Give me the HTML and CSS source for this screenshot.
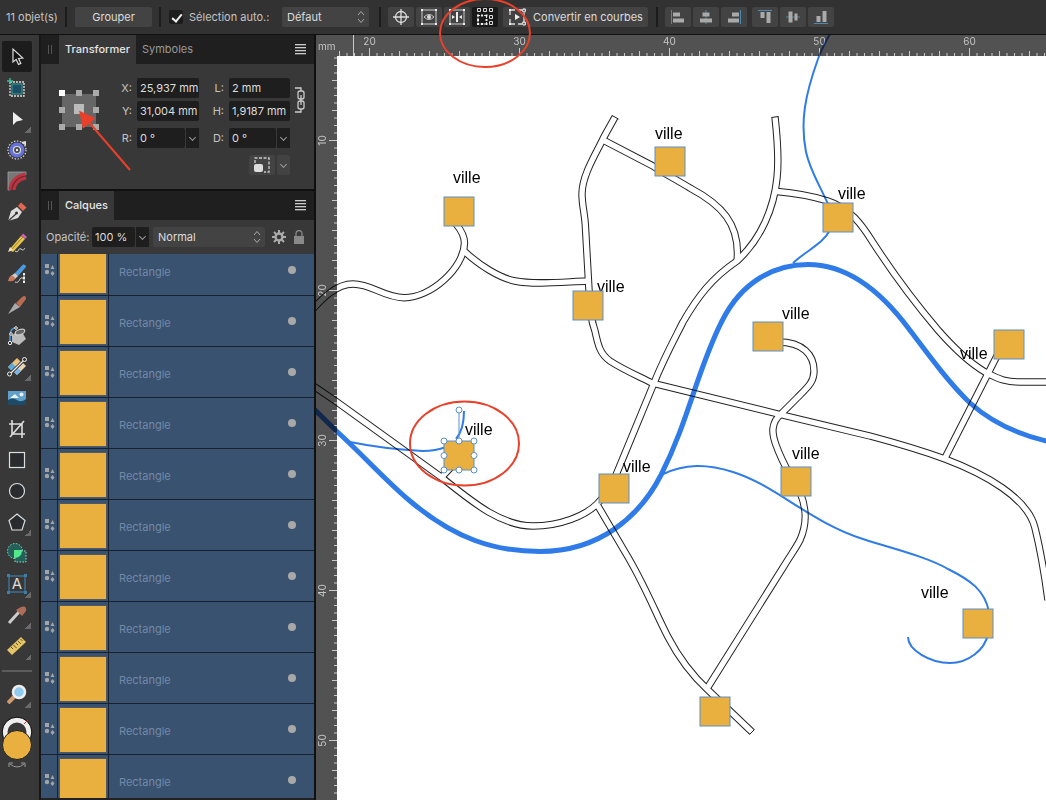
FILE: index.html
```html
<!DOCTYPE html>
<html lang="fr">
<head>
<meta charset="utf-8">
<title>Carte des villes</title>
<link rel="stylesheet" href="styles.css">
</head>

<body>

<header class="topbar">
  <span class="count">11 objet(s)</span>
  <span class="sep"></span>
  <button class="btn group">Grouper</button>
  <span class="sep"></span>
  <label class="check"><input type="checkbox" checked> Sélection auto.:</label>
  <div class="dropdown mode">
    <select aria-label="Sélection auto."><option>Défaut</option></select>
    <svg width="8" height="14" viewBox="0 0 8 14"><path d="M1 5l3-3.500 3 3.500M1 9l3 3.500 3-3.500"/></svg>
  </div>
  <span class="sep"></span>
  <div class="btns">
    <button class="btn icon" aria-label="Centre"><svg width="18" height="18" viewBox="0 0 18 18"><g fill="none" stroke="#ddd" stroke-width="1.300"><circle cx="9" cy="9" r="5.500"/><path d="M9 1v16M1 9h16"/></g></svg></button>
    <button class="btn icon" aria-label="Aperçu"><svg width="18" height="18" viewBox="0 0 18 18"><g fill="none" stroke="#ccc"><rect x="2" y="2" width="14" height="14"/><path d="M4 9q5-5 10 0q-5 5-10 0z"/></g><circle cx="9" cy="9" r="2" fill="#ddd"/><path fill="#eee" d="M1 1h2v2H1zM15 1h2v2h-2zM1 15h2v2H1zM15 15h2v2h-2z"/></svg></button>
    <button class="btn icon" aria-label="Symétrie"><svg width="18" height="18" viewBox="0 0 18 18"><rect x="2" y="2" width="14" height="14" fill="none" stroke="#ccc"/><path fill="#eee" d="M8 4h2v10H8zM4 7l3 2-3 2zM14 7l-3 2 3 2zM1 1h2v2H1zM15 1h2v2h-2zM1 15h2v2H1zM15 15h2v2h-2z"/></svg></button>
    <button class="btn icon on" aria-label="Transformer séparément"><svg width="20" height="20" viewBox="0 0 20 20"><g fill="none" stroke="#ddd"><path d="M2.500 1.500h3v3h-3zM8.500 1.500h3v3h-3zM14.500 1.500h3v3h-3zM14.500 8.500h3v3h-3zM14.500 14.500h3v3h-3z"/><rect x="3" y="8.500" width="8.500" height="8.500" stroke-dasharray="2 1"/></g><path fill="#eee" d="M2 7.500h2v2H2zM6 7.500h2v2H6zM10.500 7.500h2v2h-2zM2 16h2v2H2zM6 16h2v2H6zM10.500 16h2v2h-2zM2 12h2v2H2zM10.500 12h2v2h-2z"/></svg></button>
  </div>
  <button class="btn convert"><svg width="18" height="18" viewBox="0 0 18 18"><g fill="none" stroke="#ddd" stroke-width="1.300"><path d="M7 2H2v5M2 11v5h5M10 16h4M16 5v9M10 2h4"/><circle cx="16" cy="2.500" r="1.500"/><circle cx="16" cy="15.500" r="1.500"/></g><path fill="#eee" d="M7 6l5 3-5 3zM1 1h2v2H1zM1 15h2v2H1z"/></svg>Convertir en courbes</button>
  <span class="sep"></span>
  <div class="btns">
    <button class="btn icon" aria-label="Aligner à gauche"><svg width="18" height="18" viewBox="0 0 18 18"><path class="al-line" d="M2.500 2v14"/><path class="al-bar" d="M4 4.500h7v4H4zM4 10.500h11v4H4z"/></svg></button>
    <button class="btn icon" aria-label="Centrer horizontalement"><svg width="18" height="18" viewBox="0 0 18 18"><path class="al-line" d="M9 2v14"/><path class="al-bar" d="M5.500 4.500h7v4h-7zM3 10.500h12v4H3z"/></svg></button>
    <button class="btn icon" aria-label="Aligner à droite"><svg width="18" height="18" viewBox="0 0 18 18"><path class="al-line" d="M15.500 2v14"/><path class="al-bar" d="M7 4.500h7v4H7zM3 10.500h11v4H3z"/></svg></button>
  </div>
  <div class="btns">
    <button class="btn icon" aria-label="Aligner en haut"><svg width="18" height="18" viewBox="0 0 18 18"><path class="al-line" d="M2 2.500h14"/><path class="al-bar" d="M4.500 4h4v6h-4zM10.500 4h4v11h-4z"/></svg></button>
    <button class="btn icon" aria-label="Centrer verticalement"><svg width="18" height="18" viewBox="0 0 18 18"><path class="al-line" d="M2 9h14"/><path class="al-bar" d="M4.500 3.500h4v11h-4zM10.500 5.500h3v7h-3z"/></svg></button>
    <button class="btn icon" aria-label="Aligner en bas"><svg width="18" height="18" viewBox="0 0 18 18"><path class="al-line" d="M2 15.500h14"/><path class="al-bar" d="M4.500 8h4v6h-4zM10.500 3h4v11h-4z"/></svg></button>
  </div>
</header>

<div class="main">

  <nav class="tools">
    <button class="tool on" aria-label="Déplacement"><svg viewBox="0 0 20 20"><path d="M6 2v13l3.200-2.600 2.300 5 2.300-1-2.300-4.900 4.300-.5z" fill="#111" stroke="#ddd" stroke-width="1.200"/></svg></button>
    <button class="tool" aria-label="Plan de travail"><svg viewBox="0 0 20 20"><rect x="3" y="4" width="14" height="14" fill="none" stroke="#ddd" stroke-width="1.300" stroke-dasharray="2 1"/><rect x="5" y="6" width="10" height="10" fill="#1c4f63" stroke="#3a9b96"/><path d="M3 0v6M0 3h6" stroke="#46b99a" stroke-width="1.400"/></svg></button>
    <button class="tool more" aria-label="Nœud"><svg viewBox="0 0 20 20"><path d="M6 3v13l3.500-3.500L16 11z" fill="#eee"/></svg></button>
    <button class="tool" aria-label="Contour"><svg viewBox="0 0 20 20"><circle cx="10" cy="10" r="9" fill="none" stroke="#ddd" stroke-width="1.200" stroke-dasharray="1.500 1.500"/><circle cx="10" cy="10" r="7.500" fill="#6672dc"/><circle cx="10" cy="10" r="3.500" fill="#444" stroke="#ddd" stroke-width="1.200"/><circle cx="10" cy="10" r="1.200" fill="#eee"/><path d="M19 1v5l-5-4z" fill="#ddd"/></svg></button>
    <button class="tool" aria-label="Coin"><svg viewBox="0 0 20 20"><path d="M1 1h18v3C10 5 4 11 3 19H1z" fill="#777" stroke="#aaa" stroke-width=".7"/><path d="M5 19C5 12 11 6 19 5" fill="none" stroke="#b83642" stroke-width="7"/><path d="M5 19C5 12 11 6 19 5" fill="none" stroke="#7c1f2a" stroke-width="1.200"/></svg></button>
    <button class="tool" aria-label="Plume"><svg viewBox="0 0 20 20"><path d="M1 19l3-10 6-4 5 5-4 6z" fill="#ddd"/><path d="M1 19l8-7" stroke="#333" stroke-width="1.200"/><circle cx="9.500" cy="11" r="1.500" fill="#333"/><path d="M11 4l3-3.500 5.500 5L16 9z" fill="#e5674e"/></svg></button>
    <button class="tool" aria-label="Crayon"><svg viewBox="0 0 20 20"><path d="M2 17L14 3l4 3L6 19z" fill="#e6c64e"/><path d="M4 17L16 4" stroke="#a78420"/><path d="M1 19l2-5 3 3z" fill="#f2dfbe"/><path d="M14 3l2-2.500L20 4l-2 2z" fill="#cf63b0"/><path d="M8 18c4 3 3-4 6-2s2 1 4-1" fill="none" stroke="#ddd"/></svg></button>
    <button class="tool" aria-label="Pinceau vectoriel"><svg viewBox="0 0 20 20"><path d="M8 9l8-8.500q3-.5 3 2.500l-8 9z" fill="#4a9be0"/><path d="M8 9l3 3-3 3-4-3z" fill="#ccc"/><path d="M1 17q2-7 5-5l2 2q0 4-7 3z" fill="#c5785b"/><path d="M8 18c5 2 4-5 7-4h2M17 10v8" fill="none" stroke="#ddd"/><path d="M16 9h2v2h-2zM16 13h2v2h-2zM16 17h2v2h-2z" fill="#eee"/></svg></button>
    <button class="tool" aria-label="Couteau"><svg viewBox="0 0 20 20"><path d="M9 8l6-6q4-3 4 2l-6 8z" fill="#b96c52"/><path d="M8 8l5 4L1 19z" fill="#aaa"/></svg></button>
    <button class="tool" aria-label="Remplissage"><svg viewBox="0 0 20 20"><path d="M5 9l9-5 5 9-7 6-7-3z" fill="#bbb"/><ellipse cx="13" cy="6" rx="5" ry="2.500" fill="#666" stroke="#ddd" transform="rotate(-20 13 6)"/><path d="M3 17V10C3 5 5 2 9 1.500" fill="none" stroke="#4a9be0" stroke-width="1.500"/><g fill="#333" stroke="#eee"><circle cx="3" cy="17" r="1.700"/><circle cx="4" cy="8" r="1.300"/><circle cx="9" cy="2" r="1.300"/></g></svg></button>
    <button class="tool more" aria-label="Dégradé"><svg viewBox="0 0 20 20"><path d="M1 10l9-9 4 4-9 9z" fill="#e9c280"/><path d="M1 10l4-4 4 4-4 4z" fill="#59a7dd"/><path d="M7 15l9-9 3 3-9 9z" fill="#e9d6b0"/><path d="M7 15l4-4 3 3-4 4z" fill="#7bb7e5"/><path d="M3 17L17 3" stroke="#333" stroke-width="3"/><path d="M3 17L17 3" stroke="#eee" stroke-width="1.300"/><circle cx="2.500" cy="17" r="2" fill="#333" stroke="#eee"/><circle cx="17.500" cy="2.500" r="2" fill="#333" stroke="#eee"/></svg></button>
    <button class="tool" aria-label="Image"><svg viewBox="0 0 20 20"><rect x="1" y="3" width="18" height="14" fill="#5f9fc9"/><path d="M3 10l5-4 4 4z" fill="#e8f0f5"/><circle cx="14.500" cy="6.500" r="2" fill="#e8f0f5"/><path d="M1 12q5-3 9 0t9-1v6H1z" fill="#1d4a66"/></svg></button>
    <button class="tool" aria-label="Rogner"><svg viewBox="0 0 20 20"><path d="M5 1v14h13M2 5h13v14M3 18L17 2" fill="none" stroke="#ddd" stroke-width="1.600"/></svg></button>
    <button class="tool" aria-label="Rectangle"><svg viewBox="0 0 20 20"><rect x="2.500" y="2.500" width="15" height="15" fill="#292c2e" stroke="#ddd" stroke-width="1.200"/></svg></button>
    <button class="tool" aria-label="Ellipse"><svg viewBox="0 0 20 20"><circle cx="10" cy="10" r="7.500" fill="#292c2e" stroke="#ddd" stroke-width="1.200"/></svg></button>
    <button class="tool more" aria-label="Polygone"><svg viewBox="0 0 20 20"><path d="M10 2l8 6.500-3 9.500H5L2 8.500z" fill="#292c2e" stroke="#ddd" stroke-width="1.200"/></svg></button>
    <button class="tool" aria-label="Création de forme"><svg viewBox="0 0 20 20"><circle cx="8" cy="8" r="7.500" fill="#236158" stroke="#8fdcd5" stroke-dasharray="1.500 1.500"/><path d="M8 8h11v11H8z" fill="#236158" stroke="#8fdcd5" stroke-dasharray="1.500 1.500"/><path d="M7 7h8q0 8-8 8z" fill="#52e887"/></svg></button>
    <button class="tool more" aria-label="Texte"><svg viewBox="0 0 20 20"><rect x="2" y="2" width="16" height="16" fill="none" stroke="#3e7eaa" stroke-width="1.200"/><path fill="#3e7eaa" d="M0 0h3v3H0zM17 0h3v3h-3zM0 17h3v3H0zM17 17h3v3h-3z"/><text x="10" y="15" text-anchor="middle">A</text></svg></button>
    <button class="tool more" aria-label="Pipette"><svg viewBox="0 0 20 20"><path d="M2 18L12 7" stroke="#ccc" stroke-width="3"/><path d="M9 5l6 6 4-5q1-6-5-4z" fill="#ae6d58"/></svg></button>
    <button class="tool more" aria-label="Mesure"><svg viewBox="0 0 20 20"><path d="M0 14L14 1l5 5L5 19z" fill="#e4c465"/><path d="M4 11l2 2M6.500 9l3 3M9 7l2 2M11 5l3 3M13.500 3l2 2" stroke="#65511c"/></svg></button>
    <hr class="tools-line">
    <button class="tool more" aria-label="Zoom"><svg viewBox="0 0 20 20"><path d="M1 19l6-6" stroke="#d09b70" stroke-width="4"/><circle cx="12" cy="8" r="6" fill="#8fcaf0" stroke="#eee" stroke-width="2.500"/></svg></button>
    <svg class="well" width="34" height="56" viewBox="0 0 34 56"><circle cx="17" cy="18" r="12" fill="none" stroke="#eee" stroke-width="5"/><circle cx="17" cy="18" r="14.800" fill="none" stroke="#111"/><path d="M24 10l4-4" stroke="#d33"/><circle cx="17" cy="31" r="14.500" fill="#e9b040" stroke="#222"/><path d="M10 50q7 6 14 0M9 53v-4h4M25 53v-4h-4" fill="none" stroke="#999"/></svg>
  </nav>

  <aside class="panels">
    <div class="tabs">
      <span class="grip"></span><button class="tab on">Transformer</button><button class="tab">Symboles</button><button class="burger" aria-label="Menu"></button>
    </div>
    <div class="transform">
      <svg class="anchor" width="40" height="40" viewBox="0 0 40 40"><rect x="3" y="4" width="34" height="33" fill="#666"/><g fill="#aaa"><path d="M17 0h6v6h-6zM34 0h6v6h-6zM0 17h6v6H0zM34 17h6v6h-6zM0 34h6v6H0zM17 34h6v6h-6zM34 34h6v6h-6z"/><rect x="15" y="14" width="10" height="10" fill="#bbb"/></g><path d="M0 0h6v6H0z" fill="#fff"/></svg>
      <div class="fields">
        <label for="fx">X:</label><div class="field"><input id="fx" value="25,937 mm"></div>
        <label for="fl">L:</label><div class="field"><input id="fl" value="2 mm"></div>
        <label for="fy">Y:</label><div class="field"><input id="fy" value="31,004 mm"></div>
        <label for="fh">H:</label><div class="field"><input id="fh" value="1,9187 mm"></div>
        <label for="fr" class="low">R:</label><div class="field low"><input id="fr" value="0 °"><button class="drop" aria-label="Rotation"></button></div>
        <label for="fd" class="low">D:</label><div class="field low"><input id="fd" value="0 °"><button class="drop" aria-label="Décalage"></button></div>
        <div class="scale"><button class="btn icon" aria-label="Échelle"><svg width="18" height="18" viewBox="0 0 18 18"><path d="M2 7V2h14v14h-5" fill="none" stroke="#ccc" stroke-width="1.300" stroke-dasharray="3 1.500"/><rect x="1" y="8" width="9" height="8" rx="2" fill="#ddd"/></svg></button><button class="btn drop" aria-label="Options d'échelle"></button></div>
      </div>
      <svg class="link" width="12" height="28" viewBox="0 0 12 28"><g fill="none" stroke="#ccc" stroke-width="1.300"><path d="M1 2h6v3M1 26h6v-3"/><rect x="4" y="5" width="6" height="8" rx="2"/><rect x="4" y="15" width="6" height="8" rx="2"/><path d="M7 9v10"/></g></svg>
    </div>
    <div class="tabs second">
      <span class="grip"></span><button class="tab on">Calques</button><button class="burger" aria-label="Menu"></button>
    </div>
    <div class="opacity">
      <label for="op">Opacité:</label>
      <div class="field"><input id="op" value="100 %"><button class="drop" aria-label="Opacité"></button></div>
      <div class="dropdown blend">
        <select aria-label="Mode de fusion"><option>Normal</option></select>
        <svg width="8" height="14" viewBox="0 0 8 14"><path d="M1 5l3-3.500 3 3.500M1 9l3 3.500 3-3.500"/></svg>
      </div>
      <svg class="gear" width="14" height="14" viewBox="0 0 14 14"><circle cx="7" cy="7" r="3.500" fill="none" stroke="#aaa" stroke-width="2.400"/><path d="M7 0v3M7 11v3M0 7h3M11 7h3M2 2l2.200 2.200M9.800 9.800L12 12M12 2L9.800 4.200M2 12l2.200-2.200" stroke="#aaa" stroke-width="2"/></svg>
      <svg width="10" height="14" viewBox="0 0 10 14"><rect y="6" width="10" height="8" fill="#888"/><path d="M2 6V3.500a3 3 0 0 1 6 0V6" fill="none" stroke="#888" stroke-width="1.300"/></svg>
    </div>
    <ul class="layers" id="layers"></ul>
  </aside>

  <div class="workspace">
    <div class="unit">mm</div>
    <svg class="ruler" id="rulerH"></svg>
    <svg class="ruler" id="rulerV"></svg>
    <div class="page"></div>

    <svg class="map">
      <defs>
        <g id="roads">
          <path d="M312 310C322 299 336 284 353 284C372 284 384 297.700 404 297.700C431 297.700 464 268 464.500 243C464.500 236 461 230 456 224"/>
          <path d="M464 251C480 266 500 278 515 281C535 285 562 282 588 281"/>
          <path d="M615 117C608 130 604 136 602 141C592 160 582 178 582 194C582 206 585 214 585.500 228L589 290C590 310 591 320 595 331C598 345 600 354 610 361C622 369 636 375 652 383L778 414L870 436C885 440 915 448 945 459C985 474 1028 498 1035 528C1040 548 1044 570 1048 600"/>
          <path d="M603 140L653 166C660 171 675 179 690 188C720 204 741 223 737 262"/>
          <path d="M775 117C777 135 779 160 777 178C774 207 762 238 737 261C712 278 698 296 683 322C674 340 664 358 654 383L616 475C612 487 606 495 597 504C585 516 560 526 533 526C500 526 470 500 441 477L337 402L312 385"/>
          <path d="M777 191.500C795 193 815 197 828 201C850 208 862 225 872 241C892 272 915 303 938 330C952 346 970 363 985 372C1000 380 1007 382 1020 382L2000 383"/>
          <path d="M1003 344L945 458"/>
          <path d="M778 342C803 342 814 355 814 371C814 382 808 387 797 398L782 413C770 423 772 434 776 445C780 456 785 466 790 475L800 492C806 507 808 522 800 540C796 548 790 556 784 566L708 687"/>
          <path d="M598 506L625 552C645 585 655 612 668 637C680 660 695 678 708 690L752 732"/>
          <path d="M454 464L441 478"/>
        </g>
      </defs>
      <g transform="translate(-316 -35)">
        <use href="#roads" class="road-edge"/>
        <use href="#roads" class="road-fill"/>
        <!-- the free road ends are closed -->
        <path class="cap" d="M612 115.500l6.500 3.500M771.500 117.500l7-1M749.500 734.500l5-5"/>
        <g class="river">
          <path class="wide" d="M312 407L337 431.500C365 457 385 480 410 501C455 539 495 551.500 540 551.500C600 551.500 640 516 661 475C690 417 697 370 722 321C742 281 775 264.500 808 264.500C846 264.500 880 290 909 329C930 357 950 384 970 403C990 421 1015 434 1050 442"/>
          <path d="M350 442C375 447 400 450 423 451C432 451 438 450 446 447"/>
          <path d="M464 411C464 426 461 433 456 439"/>
          <path d="M832 30C824 45 820 52 818 59C805 95 800 122 806 152C810 170 818 182 828 204"/>
          <path d="M830 230C823 244 807 250 793 263"/>
          <path d="M661 475C685 463 708 464 733 472C775 485 810 522 863 539C890 548 925 556 948 569C970 580 985 590 989 612"/>
          <path d="M988 634C985 650 968 663 950 663C930 663 908 650 908 637"/>
        </g>
        <g id="cities"></g>
        <g class="handles">
          <path d="M459 410v30"/>
          <circle cx="459" cy="410" r="3"/>
          <circle cx="444" cy="441" r="3"/><circle cx="459" cy="441" r="3"/><circle cx="474" cy="441" r="3"/>
          <circle cx="444" cy="455.500" r="3"/><circle cx="474" cy="455.500" r="3"/>
          <circle cx="444" cy="470" r="3"/><circle cx="459" cy="470" r="3"/><circle cx="474" cy="470" r="3"/>
        </g>
      </g>
    </svg>
  </div>
</div>

<svg class="notes">
  <ellipse cx="485" cy="33" rx="45" ry="34"/>
  <ellipse cx="464.500" cy="443.500" rx="54.500" ry="42"/>
  <path d="M130 170L87 120"/>
  <path class="head" d="M80.500 112.500l13 6-10 8.500z"/>
</svg>

<script src="script.js"></script>
</body>
</html>
```

FILE: styles.css
```css
* {
  box-sizing: border-box;
}
body {
  margin: 0;
  height: 100vh;
  display: flex;
  flex-direction: column;
  overflow: hidden;
  background: #383838;
  color: #c4c4c4;
  font: 12px/16px Inter, Roboto, sans-serif;
}
button, input, select {
  font: inherit;
  color: #ddd;
  border: 0;
  margin: 0;
  padding: 0;
  background: none;
}
svg {
  display: block;
  flex: none;
}

/* top bar */
.topbar {
  flex: none;
  height: 35px;
  display: flex;
  align-items: center;
  padding-left: 6px;
  background: #323232;
  border-bottom: 1px solid #111;
  font-size: 11px;
  white-space: nowrap;
}
.count {
  width: 59px;
}
.sep {
  width: 2px;
  height: 20px;
  background: #1c1c1c;
}
.btn {
  height: 20px;
  border-radius: 2px;
  background: #434343;
}
.btn.icon {
  width: 26px;
  display: flex;
  align-items: center;
  justify-content: center;
}
.btn.on {
  background: #191919;
}
.group {
  width: 77px;
  margin: 0 7px 0 8px;
}
.check {
  display: flex;
  align-items: center;
  gap: 6px;
  width: 113px;
  margin-left: 8px;
}
.check input {
  appearance: none;
  width: 14px;
  height: 14px;
  border-radius: 2px;
  background: #1d1d1d;
}
.check input:checked::after {
  content: "";
  display: block;
  width: 4px;
  height: 8px;
  margin: 2px 5px;
  border: solid #eee;
  border-width: 0 2px 2px 0;
  transform: rotate(40deg);
}
.dropdown {
  display: grid;
  align-items: center;
  height: 20px;
  border-radius: 2px;
  background: #434343;
}
.dropdown select {
  grid-area: 1 / 1;
  appearance: none;
  height: 20px;
  padding: 0 5px;
}
.dropdown svg {
  grid-area: 1 / 1;
  justify-self: end;
  margin-right: 4px;
  fill: none;
  stroke: #aaa;
  pointer-events: none;
}
.mode {
  width: 87px;
  margin-right: 10px;
}
.btns {
  display: flex;
  gap: 2px;
  margin-left: 5px;
}
.sep + .btns {
  margin-left: 7px;
}
.convert {
  display: flex;
  align-items: center;
  justify-content: center;
  gap: 7px;
  width: 145px;
  margin: 0 8px 0 5px;
}
.al-line {
  stroke: #4b8cae;
}
.al-bar {
  fill: #aaa;
}

/* tools */
.main {
  flex: 1;
  min-height: 0;
  display: flex;
}
.tools {
  flex: none;
  width: 41px;
  display: flex;
  flex-direction: column;
  padding: 6px 0 0 2px;
  border-right: 2px solid #181818;
}
.tool {
  position: relative;
  flex: none;
  width: 30px;
  height: 31px;
  display: flex;
  align-items: center;
  justify-content: center;
}
.tool.on {
  background: #1c1c1c;
  border-radius: 2px;
}
.tool svg {
  width: 20px;
  height: 20px;
}
.tool text {
  font: 15px Inter, sans-serif;
  fill: #ddd;
}
.more::after {
  content: "";
  position: absolute;
  right: 1px;
  bottom: 1px;
  width: 6px;
  height: 6px;
  background: linear-gradient(135deg, transparent 50%, #6a6a6a 50%);
}
.tools-line {
  width: 30px;
  height: 2px;
  margin: 9px 0 6px;
  border: 0;
  background: #5c5c5c;
}
.well {
  margin: 5px 0 0 -2px;
}

/* panels */
.panels {
  flex: none;
  width: 275px;
  display: flex;
  flex-direction: column;
  border-right: 2px solid #101010;
}
.tabs {
  flex: none;
  height: 29px;
  display: flex;
  background: #1f1f1f;
}
.tabs.second {
  height: 31px;
  border-top: 2px solid #101010;
}
.grip {
  width: 4px;
  height: 9px;
  margin: 10px 7px 0;
  border: solid #555;
  border-width: 0 1px;
}
.tab {
  padding: 0 6px 2px;
  font-size: 11px;
  color: #999;
}
.tab.on {
  background: #383838;
  color: #e6e6e6;
  font-weight: 500;
}
.burger {
  width: 11px;
  height: 11px;
  margin: 9px 8px 0 auto;
  background: repeating-linear-gradient(#ccc 0 1px, #555 1px 2px, transparent 2px 3px);
}
.transform {
  flex: none;
  display: flex;
  height: 125px;
  padding: 14px 8px 0 18px;
}
.anchor {
  margin-top: 12px;
}
.fields {
  display: grid;
  grid-template-columns: 38px 62px 30px 61px;
  grid-auto-rows: 20px;
  gap: 3px 0;
  font-size: 11px;
  align-items: center;
}
.fields label {
  text-align: right;
  padding-right: 5px;
}
.field {
  display: flex;
  gap: 1px;
  height: 20px;
}
.field input {
  flex: 1;
  min-width: 0;
  padding-left: 3px;
  background: #1e1e1e;
  border-radius: 2px;
}
.drop {
  width: 13px;
  height: 20px;
  background: #1e1e1e;
}
.drop::after {
  content: "";
  display: block;
  width: 4px;
  height: 4px;
  margin: -2px auto 0;
  border: solid #999;
  border-width: 0 1px 1px 0;
  transform: rotate(45deg);
}
.low {
  margin-top: 8px;
}
.scale {
  grid-column: 1 / 5;
  display: flex;
  justify-content: flex-end;
  gap: 2px;
  margin-top: 16px;
}
.scale .drop {
  background: #434343;
}
.link {
  margin: 8px 0 0 4px;
}
.opacity {
  flex: none;
  display: flex;
  align-items: center;
  height: 34px;
  padding-left: 5px;
  font-size: 11px;
}
.opacity label {
  width: 46px;
}
.opacity .field {
  width: 57px;
}
.blend {
  width: 112px;
  margin-left: 4px;
}
.gear {
  margin: 0 8px 0 7px;
}

/* layer list */
.layers {
  flex: 1;
  min-height: 0;
  margin: 0;
  padding: 0;
  overflow: hidden;
  list-style: none;
  border-bottom: 2px solid #222;
}
.layer {
  display: flex;
  align-items: center;
  height: 51px;
  background: #38526f;
  border-bottom: 1px solid #18222e;
}
/* list is scrolled a few pixels down */
.layer:first-child {
  margin-top: -9px;
}
.kind {
  width: 17px;
  height: 50px;
  padding: 18px 0 0 3px;
  border-right: 1px solid #18222e;
}
.thumb {
  width: 51px;
  height: 50px;
  padding: 3px 1px 0;
  border-right: 1px solid #18222e;
}
.swatch {
  height: 46px;
  background: #e9b040;
  border: 1px solid #4f5866;
}
.layer-name {
  flex: 1;
  padding: 4px 0 0 10px;
  font-size: 11px;
  color: #7389a7;
}
.dot {
  width: 8px;
  height: 8px;
  margin-right: 18px;
  border-radius: 50%;
  background: #a8a8a8;
}

/* workspace */
.workspace {
  flex: 1;
  min-width: 0;
  display: grid;
  grid-template: 21px 1fr / 21px 1fr;
  background: #525252;
  isolation: isolate;
  overflow: hidden;
}
.unit {
  grid-area: 1 / 1;
  padding: 3px 0 0 2px;
  font-size: 10px;
}
.ruler {
  width: 100%;
  height: 100%;
  fill: #c4c4c4;
  stroke: none;
  font-size: 10px;
}
.ruler path {
  stroke: #c9c9c9;
  fill: none;
}
#rulerH {
  grid-area: 1 / 1 / 2 / 3;
}
#rulerV {
  grid-area: 1 / 1 / 3 / 2;
}
.page {
  grid-area: 2 / 2;
  background: #fff;
}
.map {
  grid-area: 1 / 1 / 3 / 3;
  width: 100%;
  height: 100%;
  overflow: hidden;
  mix-blend-mode: multiply;
}
.road-edge {
  fill: none;
  stroke: #222;
  stroke-width: 7.4px;
}
.road-fill {
  fill: none;
  stroke: #fff;
  stroke-width: 5.4px;
}
.cap {
  stroke: #222;
}
.river {
  fill: none;
  stroke: #2f7be8;
  stroke-width: 2px;
  mix-blend-mode: multiply;
}
.river .wide {
  stroke-width: 5px;
}
.city-name {
  font: 16px "Liberation Sans", Arial, sans-serif;
  fill: #000;
}
.city {
  fill: #e9b040;
  stroke: #5b8fc7;
}
.handles {
  fill: #fff;
  stroke: #5b8fc7;
}

/* red marks */
.notes {
  position: absolute;
  top: 0;
  left: 0;
  width: 100%;
  height: 100%;
  fill: none;
  stroke: #e8402a;
  stroke-width: 2px;
  pointer-events: none;
}
.notes .head {
  fill: #e8402a;
}
```

FILE: script.js
```js
// square centre, then label position (the last town has no label)
var cities = [
  [459, 211, 453, 183],
  [588, 305, 597, 292],
  [670, 161, 655, 139],
  [838, 217, 838, 199],
  [768, 336, 782, 319],
  [1009, 344, 960, 359],
  [796, 481, 792, 459],
  [614, 488, 623, 472],
  [459, 455, 465, 435],
  [978, 623, 921, 598],
  [715, 711]
];

function drawCities() {
  var out = "";
  for (var i = 0; i < cities.length; i++) {
    var c = cities[i];
    if (c.length > 2)
      out += '<text class="city-name" x="' + c[2] + '" y="' + c[3] + '">ville</text>';
    out += '<rect class="city" x="' + (c[0] - 15) + '" y="' + (c[1] - 14) + '" width="30" height="29"/>';
  }
  document.getElementById("cities").innerHTML = out;
}

// 20 half-millimetre ticks for each 10 mm, 150px apart
function drawRuler(id, start, size, vertical) {
  var path = "", text = "";
  var first = vertical ? 10 : 20;
  for (var i = -12; start + i * 7.5 < size; i++) {
    var pos = start + i * 7.5;
    if (pos < 21)
      continue;
    var len = i % 20 == 0 ? 8 : (i % 4 == 0 ? 5 : 3);
    path += vertical ? "M21 " + pos + "h-" + len : "M" + pos + " 21v-" + len;
    if (i % 20 == 0 && pos < size - 8) {
      var place = vertical ? "translate(10 " + pos + ") rotate(-90)" : "translate(" + pos + " 10)";
      text += '<text transform="' + place + '" text-anchor="middle">' + (first + i / 2) + '</text>';
    }
  }
  if (!vertical)
    path += "M37.5 0v21"; // pointer mark
  document.getElementById(id).innerHTML = '<path d="' + path + '"/>' + text;
}

function drawRulers() {
  var box = document.querySelector(".workspace");
  drawRuler("rulerH", 53.5, box.clientWidth, false);
  drawRuler("rulerV", 105.5, box.clientHeight, true);
}

function drawLayers() {
  var row = '<li class="layer">' +
    '<span class="kind"><svg width="11" height="14" viewBox="0 0 11 14" fill="#a4a4a4"><path d="M1 1h4v4H1zM8.500 2l2 4h-4zM8.500 8l2 2.500-2 2.500-2-2.500z"/><circle cx="3" cy="9" r="2.200"/></svg></span>' +
    '<span class="thumb"><div class="swatch"></div></span>' +
    '<span class="layer-name">Rectangle</span><span class="dot"></span></li>';
  var out = "";
  for (var i = 0; i < 11; i++)
    out += row;
  document.getElementById("layers").innerHTML = out;
}

drawCities();
drawRulers();
drawLayers();
window.onresize = drawRulers;
```
